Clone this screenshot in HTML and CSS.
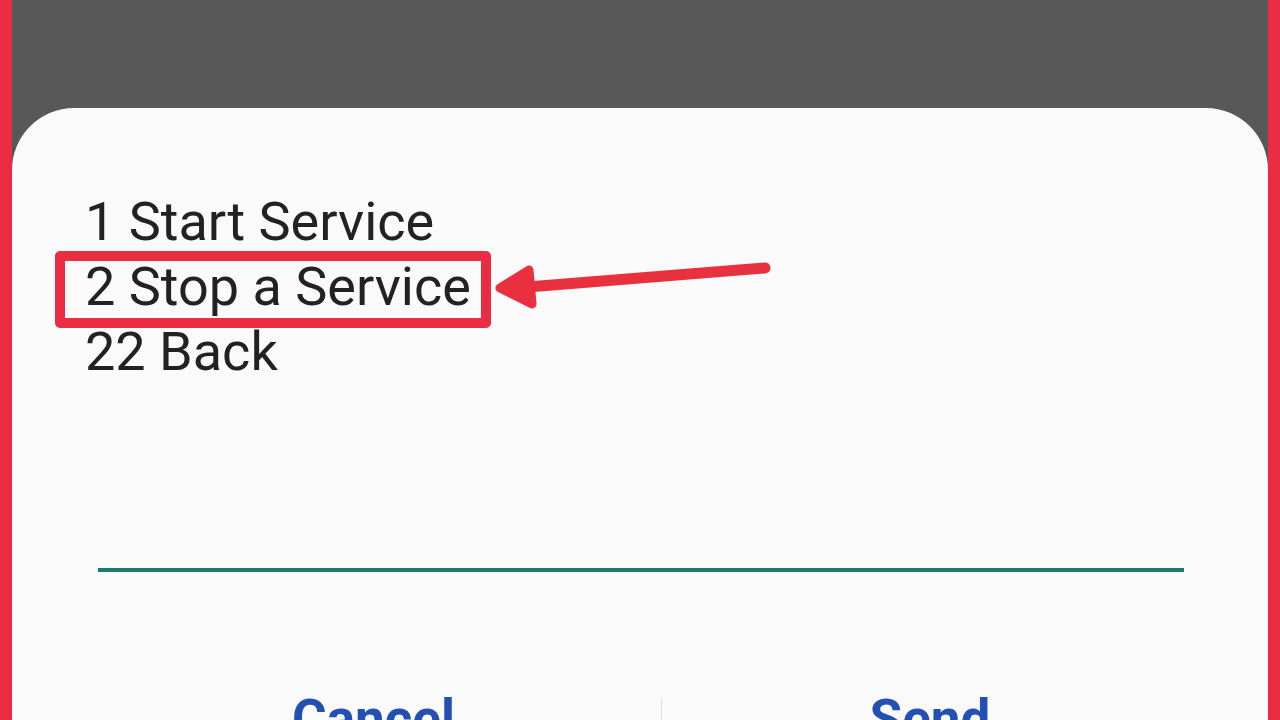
FILE: index.html
```html
<!DOCTYPE html>
<html lang="en">
<head>
<meta charset="utf-8">
<title>USSD dialog</title>
<link rel="stylesheet" href="styles.css">
</head>
<body>
<div class="frame">
  <div class="edge edge-left"></div>
  <div class="screen">
    <div class="statusbar"></div>
    <div class="dialog">
      <div class="menu">
        <div class="item">1 Start Service</div>
        <div class="item item-marked">2 Stop a Service</div>
        <div class="item">22 Back</div>
      </div>
      <div class="input-line"></div>
      <div class="actions">
        <div class="btn">Cancel</div>
        <div class="divider"></div>
        <div class="btn btn-send">Send</div>
      </div>
    </div>
  </div>
  <div class="edge edge-right"></div>
  <div class="highlight"></div>
  <svg class="arrow" width="1280" height="720" viewBox="0 0 1280 720">
    <line x1="765" y1="268" x2="515" y2="288" stroke="#e8303f" stroke-width="11" stroke-linecap="round"/>
    <polygon points="500,288 529,270 532,304" fill="#e8303f" stroke="#e8303f" stroke-width="9" stroke-linejoin="round"/>
  </svg>
</div>
</body>
</html>
```

FILE: styles.css
```css
html, body {
  margin: 0;
  padding: 0;
  background: #585858;
}

.frame {
  position: relative;
  display: flex;
  width: 1280px;
  height: 720px;
  overflow: hidden;
  font-family: Roboto, "Noto Sans", Arial, sans-serif;
}

.edge {
  background: #ea2d43;
}

.edge-left {
  width: 12px;
}

.edge-right {
  width: 12px;
}

.screen {
  flex: 1;
  display: flex;
  flex-direction: column;
  background: #585858;
}

.statusbar {
  height: 108px;
  flex: none;
}

.dialog {
  flex: 1;
  display: flex;
  flex-direction: column;
  background: #fafafa;
  border-radius: 62px 62px 0 0;
  padding-top: 81px;
}

.menu {
  padding-left: 73px;
  color: #222222;
  font-size: 54px;
  line-height: 65px;
  font-weight: 400;
}

.input-line {
  height: 4px;
  background: #1c7c6c;
  margin: 184px 84px 0 86px;
}

.actions {
  display: grid;
  grid-template-columns: 575px 1px 1fr;
  margin: 121px 84px 0 74px;
  align-items: start;
}

.btn {
  text-align: center;
  color: #2450b4;
  font-size: 53px;
  line-height: 52px;
  font-weight: 700;
}

.btn-send {
  padding-left: 14px;
}

.divider {
  margin-top: 5px;
  height: 40px;
  background: #dcdcdc;
}

.highlight {
  position: absolute;
  left: 55px;
  top: 251px;
  width: 416px;
  height: 57px;
  border: 10px solid #ea2d43;
  border-radius: 5px;
}

.arrow {
  position: absolute;
  left: 0;
  top: 0;
  pointer-events: none;
}
```
